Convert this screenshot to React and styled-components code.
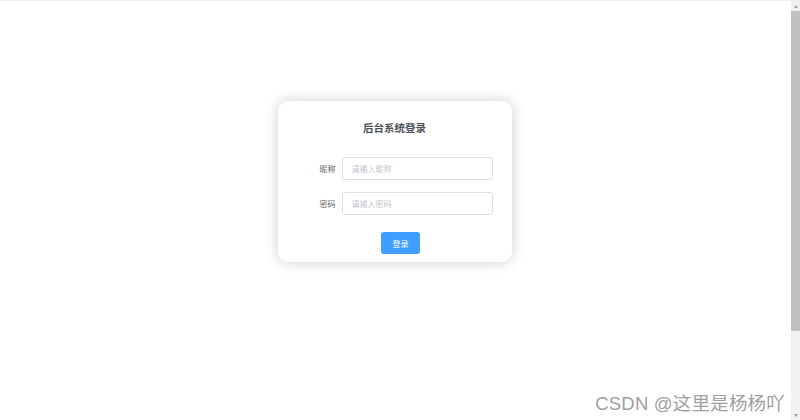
import styled, { createGlobalStyle } from "styled-components";

const GlobalStyle = createGlobalStyle`
  html, body {
    margin: 0;
    padding: 0;
    height: 100%;
    overflow: hidden;
    background: #ffffff;
    font-family: "Noto Sans CJK SC", "Noto Sans", sans-serif;
  }
  #root {
    height: 100%;
  }
`;

const Page = styled.div`
  position: relative;
  display: flex;
  height: 420px;
  box-sizing: border-box;
  border-top: 1px solid #eeeeee;
`;

const Main = styled.main`
  flex: 1;
  display: flex;
  justify-content: center;
  align-items: flex-start;
  padding: 100px 2px 0 0;
`;

const Card = styled.div`
  width: 234px;
  box-sizing: border-box;
  padding: 19px 19px 8px;
  background: #ffffff;
  border-radius: 10px;
  box-shadow: 0 0 14px rgba(0, 0, 0, 0.2);
`;

const Title = styled.h3`
  margin: 0 0 22px;
  text-align: center;
  font-size: 10.5px;
  line-height: 15px;
  font-weight: 700;
  color: #505458;
`;

const FormItem = styled.div`
  display: flex;
  align-items: center;
  margin-bottom: ${({ $gap }) => $gap}px;
`;

const Label = styled.label`
  width: 45px;
  box-sizing: border-box;
  padding-right: 6px;
  text-align: right;
  font-size: 8px;
  color: #606266;
`;

const Input = styled.input`
  flex: 1;
  min-width: 0;
  height: 23px;
  box-sizing: border-box;
  padding: 0 9px;
  border: 1px solid #dcdfe6;
  border-radius: 3px;
  font-family: inherit;
  font-size: 8px;
  color: #606266;
  outline: none;
  &::placeholder {
    color: #c0c4cc;
  }
`;

const Actions = styled.div`
  display: flex;
  justify-content: center;
  padding-left: 12px;
`;

const Button = styled.button`
  width: 39px;
  height: 22px;
  padding: 0;
  border: none;
  border-radius: 3px;
  background: #409eff;
  color: #ffffff;
  font-family: inherit;
  font-size: 8px;
`;

const Scrollbar = styled.div`
  width: 9px;
  display: flex;
  flex-direction: column;
  background: #f1f1f1;
`;

const Arrow = styled.div`
  height: 10px;
  display: flex;
  justify-content: center;
  align-items: center;
  &::after {
    content: "";
    border-left: 2.5px solid transparent;
    border-right: 2.5px solid transparent;
    ${({ $down }) =>
      $down
        ? "border-top: 3px solid #a3a3a3;"
        : "border-bottom: 3px solid #a3a3a3;"}
  }
`;

const Thumb = styled.div`
  height: 320px;
  background: #c1c1c1;
`;

const Track = styled.div`
  flex: 1;
`;

const Watermark = styled.div`
  position: absolute;
  right: 15px;
  bottom: 4px;
  font-family: "Liberation Sans", "Noto Sans CJK SC", sans-serif;
  font-size: 18.5px;
  line-height: 24px;
  letter-spacing: 0.2px;
  color: #a0a0a0;
  text-shadow: 0 0 2px #ffffff, 0 0 1px #ffffff;
`;

export default function App() {
  return (
    <>
      <GlobalStyle />
      <Page>
        <Main>
          <Card>
            <Title>后台系统登录</Title>
            <FormItem $gap={12}>
              <Label>昵称</Label>
              <Input placeholder="请输入昵称" />
            </FormItem>
            <FormItem $gap={17}>
              <Label>密码</Label>
              <Input type="password" placeholder="请输入密码" />
            </FormItem>
            <Actions>
              <Button>登录</Button>
            </Actions>
          </Card>
        </Main>
        <Scrollbar>
          <Arrow />
          <Thumb />
          <Track />
          <Arrow $down />
        </Scrollbar>
        <Watermark>CSDN @这里是杨杨吖</Watermark>
      </Page>
    </>
  );
}
